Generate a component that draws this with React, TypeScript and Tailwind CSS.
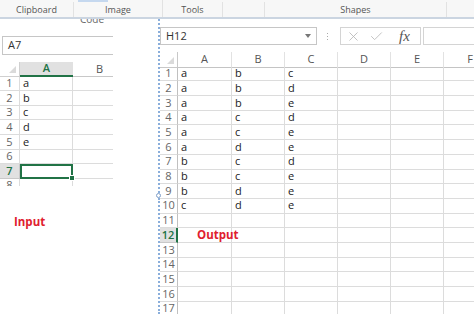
import { Check, X } from "lucide-react";

const rightRows: string[][] = [
  ["a", "b", "c"],
  ["a", "b", "d"],
  ["a", "b", "e"],
  ["a", "c", "d"],
  ["a", "c", "e"],
  ["a", "d", "e"],
  ["b", "c", "d"],
  ["b", "c", "e"],
  ["b", "d", "e"],
  ["c", "d", "e"],
  [],
  [],
  [],
  [],
  [],
  [],
  [],
];

const leftRows = ["a", "b", "c", "d", "e", "", "", ""];

function Corner() {
  return (
    <svg width="7" height="7" viewBox="0 0 7 7" className="absolute bottom-[3px] right-[3px]">
      <polygon points="7,0 7,7 0,7" fill="#dadada" />
    </svg>
  );
}

function Ribbon() {
  return (
    <div className="flex h-[17px] bg-[#f7f7f7] pt-[2px] text-[9px] text-[#555]">
      <div className="flex w-[74px] items-center justify-center border-r border-[#e2e2e2]">Clipboard</div>
      <div className="-mt-[2px] flex w-[89px] flex-col border-r border-[#e2e2e2]">
        <div className="ml-[4px] h-[2px] w-[30px] bg-[#c5d8ef]" />
        <div className="flex flex-1 items-center justify-center">Image</div>
      </div>
      <div className="flex w-[60px] items-center justify-center border-r border-[#e2e2e2]">Tools</div>
      <div className="w-[42px] border-r border-[#e2e2e2]" />
      <div className="flex w-[182px] items-center justify-center border-r border-[#e2e2e2]">Shapes</div>
      <div className="flex-1" />
    </div>
  );
}

function LeftPane() {
  return (
    <div className="flex w-[157px] flex-col">
      <div className="h-[7px] overflow-hidden">
        <div className="-mt-[7px] ml-[80px] text-[10px] leading-[14px] text-[#666]">Code</div>
      </div>
      <div className="ml-[2px] mt-[10px] flex h-[19px] w-[111px] items-center border border-r-0 border-[#c6c6c6] pl-[5px] text-[11px] text-[#333]">
        A7
      </div>
      <div className="mt-[7px] h-[124px] w-[113px] overflow-hidden">
        <div className="grid w-[126px] grid-cols-[20px_53px_53px] auto-rows-[14.6px] text-[11px]">
          <div className="relative h-[15px] border-r border-b border-[#d0d0d0]">
            <Corner />
          </div>
          <div className="flex h-[15px] items-center justify-center border-b-2 border-[#217346] bg-[#e1e1e1] font-semibold text-[#217346]">
            A
          </div>
          <div className="flex h-[15px] items-center justify-center border-b border-[#c8c8c8] text-[#555]">B</div>
          {leftRows.map((v, i) => {
            const sel = i === 6;
            return (
              <div key={i} className="contents">
                <div
                  className={
                    sel
                      ? "flex items-center justify-center border-b border-r border-[#c8c8c8] bg-[#e1e1e1] font-semibold text-[#217346]"
                      : "flex items-center justify-center border-b border-r border-[#dcdcdc] text-[#666]"
                  }
                >
                  {i + 1}
                </div>
                {sel ? (
                  <div className="relative border-2 border-[#217346]">
                    <div className="absolute -bottom-[3px] -right-[3px] h-[4px] w-[4px] bg-[#217346] ring-1 ring-white" />
                  </div>
                ) : (
                  <div className="flex items-center border-b border-r border-[#dcdcdc] pl-[3px] text-[#222]">{v}</div>
                )}
                <div className="border-b border-[#dcdcdc]" />
              </div>
            );
          })}
        </div>
      </div>
      <div className="ml-[14px] mt-[29px] text-[11.5px] font-bold leading-[14px] text-[#e0202e]">Input</div>
    </div>
  );
}

function Divider() {
  return (
    <div className="flex w-[3px] flex-col items-center">
      <div className="h-[174px] border-l-2 border-dotted border-[#8aaedb]" />
      <div className="h-[5px] w-[5px] rounded-full border border-[#7f9fc8] bg-white" />
      <div className="flex-1 border-l-2 border-dotted border-[#8aaedb]" />
    </div>
  );
}

function RightPane() {
  const cols = ["A", "B", "C", "D", "E", "F"];
  return (
    <div className="flex min-w-0 flex-1 flex-col overflow-hidden">
      <div className="mt-[8px] flex h-[18px] items-stretch">
        <div className="flex w-[157px] items-center justify-between border border-[#c6c6c6] pl-[5px] pr-[5px] text-[11px] text-[#333]">
          <span>H12</span>
          <svg width="6" height="4" viewBox="0 0 6 4">
            <polygon points="0,0 6,0 3,4" fill="#777" />
          </svg>
        </div>
        <div className="ml-[9px] flex w-[2px] flex-col items-center justify-center gap-[2px]">
          <div className="h-[1px] w-[1px] bg-[#aaa]" />
          <div className="h-[1px] w-[1px] bg-[#aaa]" />
          <div className="h-[1px] w-[1px] bg-[#aaa]" />
        </div>
        <div className="ml-[12px] flex w-[81px] items-center border border-[#d4d4d4] pl-[5px]">
          <X size={15} strokeWidth={1.3} className="text-[#b4b4b4]" />
          <Check size={15} strokeWidth={1.6} className="ml-[8px] text-[#c4c4c4]" />
          <span className="ml-[15px] font-['Liberation_Serif',serif] text-[15px] italic leading-none text-[#555]">
            fx
          </span>
        </div>
        <div className="ml-[2px] flex-1 border border-r-0 border-[#d4d4d4]" />
      </div>
      <div className="mt-[7px] grid w-[337px] grid-cols-[18px_54px_53px_53px_53px_53px_53px] auto-rows-[14.7px] text-[11px]">
        <div className="relative h-[16px] border-b border-r border-[#c8c8c8]">
          <Corner />
        </div>
        {cols.map((c) => (
          <div
            key={c}
            className="flex h-[16px] items-center justify-center border-b border-r border-b-[#c4c4c4] border-r-[#e2e2e2] text-[#555]"
          >
            {c}
          </div>
        ))}
        {rightRows.map((r, i) => {
          const sel = i === 11;
          return (
            <div key={i} className="contents">
              <div
                className={
                  sel
                    ? "flex items-center justify-center border-b border-r-2 border-b-[#c8c8c8] border-r-[#217346] bg-[#e1e1e1] font-semibold text-[#217346]"
                    : "flex items-center justify-center border-b border-r border-b-[#dcdcdc] border-r-[#c0c0c0] text-[#666]"
                }
              >
                {i + 1}
              </div>
              {cols.map((c, j) => (
                <div
                  key={c}
                  className="flex items-center whitespace-nowrap border-b border-r border-[#dcdcdc] pl-[3px] text-[#222]"
                >
                  {sel && j === 0 ? (
                    <span className="ml-[16px] text-[11.5px] font-bold text-[#e0202e]">Output</span>
                  ) : (
                    r[j] ?? ""
                  )}
                </div>
              ))}
            </div>
          );
        })}
      </div>
    </div>
  );
}

export default function App() {
  return (
    <div className="flex h-[314px] w-[474px] flex-col overflow-hidden bg-white font-['Open_Sans',sans-serif]">
      <Ribbon />
      <div className="h-[2px] bg-[#cbd5e1]" />
      <div className="flex min-h-0 flex-1">
        <LeftPane />
        <Divider />
        <RightPane />
      </div>
    </div>
  );
}
